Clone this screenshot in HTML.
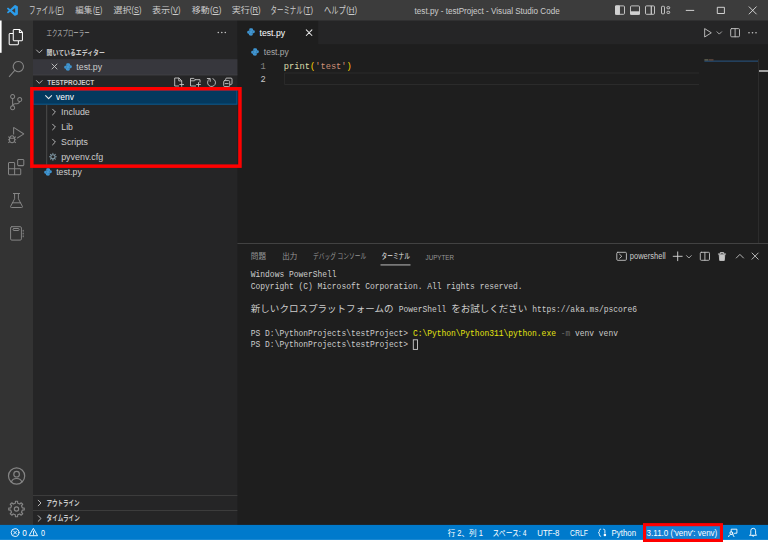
<!DOCTYPE html>
<html lang="ja"><head><meta charset="utf-8"><title>test.py - testProject - Visual Studio Code</title>
<style>
html,body{margin:0;padding:0}
body{width:768px;height:542px;position:relative;overflow:hidden;background:#ffffff;font-family:"Liberation Sans","Noto Sans CJK JP",sans-serif}
.b{position:absolute;display:block}
.t{position:absolute;white-space:pre;transform-origin:0 50%;display:block}
.t u{text-decoration:underline;text-underline-offset:1px}
svg{position:absolute;overflow:visible}
.ic{fill:none;stroke:#858585;stroke-linecap:round;stroke-linejoin:round}

</style></head>
<body>
<!-- backgrounds -->
<svg style="left:0;top:0" width="768" height="542" viewBox="0 0 768 542">
<rect x="0" y="0" width="768" height="532" fill="#1e1e1e"/>
<rect x="0" y="0" width="33" height="532" fill="#333333"/>
<rect x="33" y="0" width="204.4" height="532" fill="#252526"/>
<rect x="237.4" y="0" width="530.6" height="44.2" fill="#252526"/>
<rect x="237.4" y="0" width="80.8" height="44.2" fill="#1e1e1e"/>
<rect x="0" y="0" width="768" height="20.5" fill="#3c3c3c"/>
<rect x="0" y="524.9" width="768" height="15" fill="#007acc"/>
<!-- activity indicator -->
<rect x="0" y="20.5" width="1.6" height="32.3" fill="#ffffff"/>
<!-- sidebar rows -->
<rect x="33" y="59.2" width="204.4" height="15.8" fill="#37373d"/>
<rect x="33" y="74.6" width="204.4" height=".8" fill="#434346"/>
<rect x="33.1" y="90.1" width="203.8" height="14.1" fill="#04395e" stroke="#0b5a92" stroke-width="1"/>
<rect x="46.2" y="104.7" width="1" height="60" fill="#4c4c4c"/>
<rect x="33" y="495" width="204.4" height="1" fill="#3c3c3c"/>
<rect x="33" y="510" width="204.4" height="1" fill="#3c3c3c"/>
<!-- editor current line -->
<path d="M699 73H284.400v11.500H699" fill="none" stroke="#2b2b2b" stroke-width="1"/>
<!-- minimap/scroll -->
<rect x="758" y="59" width="1" height="184" fill="#2c2c2c"/>
<rect x="759" y="70" width="9" height="2" fill="#a0a0a0"/>
<rect x="704.4" y="60.5" width="53.6" height="1.3" fill="#264a6e"/>
<rect x="704.4" y="59.3" width="4" height="1.2" fill="#6c6c58"/>
<rect x="709" y="59.3" width="4.500" height="1.2" fill="#684e42"/>
<!-- panel -->
<rect x="237.4" y="243" width="530.6" height="1" fill="#424242"/>
<rect x="380.500" y="264.200" width="30" height="1.400" fill="#909090"/>
<rect x="413.300" y="339.800" width="4.200" height="9.600" fill="none" stroke="#cccccc" stroke-width=".9"/>
<rect x="646" y="526" width="74" height="13" fill="#1581d3"/>
</svg>
<!-- activity bar icons -->
<svg style="left:8.35px;top:28.6px" width="16.3" height="16.3" viewBox="0 0 24 24" fill="#ffffff"><path d="M17.5 0h-9L7 1.5V6H2.5L1 7.5v15.07L2.5 24h12.07L16 22.57V18h4.7l1.3-1.43V4.5L17.5 0zm0 2.12l2.38 2.38H17.5V2.12zm-3 20.38h-12v-15H7v9.07L8.5 18h6v4.5zm6-6h-12v-15H16V6h4.5v10.5z"/></svg>
<svg style="left:8.35px;top:61.3px" width="16.3" height="16.3" viewBox="0 0 24 24" fill="#858585"><path d="M15.25 0a8.25 8.25 0 0 0-6.18 13.72L1 22.88l1.12 1 8.05-9.12A8.251 8.251 0 1 0 15.25.01V0zm0 15a6.75 6.75 0 1 1 0-13.5 6.75 6.75 0 0 1 0 13.5z"/></svg>
<svg style="left:8.35px;top:94px" width="16.3" height="16.3" viewBox="0 0 24 24" fill="#858585"><path d="M21.007 8.222A3.738 3.738 0 0 0 15.045 5.2a3.737 3.737 0 0 0 1.156 6.583 2.988 2.988 0 0 1-2.668 1.67h-2.99a4.456 4.456 0 0 0-2.989 1.165V7.4a3.737 3.737 0 1 0-1.494 0v9.117a3.776 3.776 0 1 0 1.816.099 2.99 2.99 0 0 1 2.668-1.667h2.99a4.484 4.484 0 0 0 4.223-3.039 3.736 3.736 0 0 0 3.25-3.687zM4.565 3.738a2.242 2.242 0 1 1 4.484 0 2.242 2.242 0 0 1-4.484 0zm4.484 16.441a2.242 2.242 0 1 1-4.484 0 2.242 2.242 0 0 1 4.484 0zm8.221-9.715a2.242 2.242 0 1 1 0-4.485 2.242 2.242 0 0 1 0 4.485z"/></svg>
<svg style="left:8.35px;top:126.8px" width="16.3" height="16.3" viewBox="0 0 24 24" fill="#858585"><path d="M10.94 13.5l-1.32 1.32a3.73 3.73 0 0 0-7.24 0L1.06 13.5 0 14.56l1.72 1.72-.22.22V18H0v1.5h1.5v.08c.077.489.214.966.41 1.42L0 22.94 1.06 24l1.65-1.65A4.308 4.308 0 0 0 6 24a4.31 4.31 0 0 0 3.29-1.65L10.94 24 12 22.94 10.09 21c.198-.464.336-.951.41-1.45v-.1H12V18h-1.5v-1.5l-.22-.22L12 14.56l-1.06-1.06zM6 13.5a2.25 2.25 0 0 1 2.25 2.25h-4.5A2.25 2.25 0 0 1 6 13.5zm3 6a3.33 3.33 0 0 1-3 3 3.33 3.33 0 0 1-3-3v-2.25h6v2.25zm14.76-9.9v1.26L13.5 17.37V15.6l8.5-5.37L9 2v9.46a5.07 5.07 0 0 0-1.5-.72V.63L8.64 0l15.12 9.6z"/></svg>
<svg style="left:8.35px;top:159.4px" width="16.3" height="16.3" viewBox="0 0 24 24" fill="#858585"><path d="M13.5 1.5L15 0h7.5L24 1.5V9l-1.5 1.5H15L13.5 9V1.5zm1.5 0V9h7.5V1.5H15zM0 15V6l1.5-1.5H9L10.5 6v7.5H18l1.5 1.5v7.5L18 24H1.5L0 22.5V15zm9-1.5V6H1.5v7.5H9zM9 15H1.5v7.5H9V15zm1.5 7.5H18V15h-7.5v7.5z"/></svg>
<!-- flask -->
<svg style="left:0;top:0" width="33" height="260" viewBox="0 0 33 260" class="ic" stroke-width="1"><path d="M13.4 193.5h6.2M14.6 193.5v5.3l-4 7.6a.8.8 0 0 0 .7 1.1h10.4a.8.8 0 0 0 .7-1.100l-4-7.600v-5.300M12.300 202.800h8.400"/>
<!-- notebook -->
<rect x="10.600" y="226.700" width="10.800" height="13.400" rx="1.200"/><rect x="13" y="228.500" width="6.200" height="2" rx="1"/><path d="M23.200 230.300v.8M23.200 233.100v.8M23.200 235.900v.8" stroke-width="1.100"/></svg>
<!-- account -->
<svg style="left:0;top:460px" width="33" height="65" viewBox="0 460 33 65" class="ic" stroke-width="1.2"><circle cx="16.600" cy="476" r="8.100"/><circle cx="16.600" cy="474.200" r="2.800"/><path d="M11.400 482c.6-2.300 2.700-3.500 5.200-3.500s4.600 1.200 5.200 3.500"/>
<!-- gear -->
<g transform="translate(16.500 509) scale(.94)" stroke-width="1.25"><path d="M-1.28 -6.17 L-1.10 -8.23 L1.10 -8.23 L1.28 -6.17 L3.46 -5.27 L5.04 -6.60 L6.60 -5.04 L5.27 -3.46 L6.17 -1.28 L8.23 -1.10 L8.23 1.10 L6.17 1.28 L5.27 3.46 L6.60 5.04 L5.04 6.60 L3.46 5.27 L1.28 6.17 L1.10 8.23 L-1.10 8.23 L-1.28 6.17 L-3.46 5.27 L-5.04 6.60 L-6.60 5.04 L-5.27 3.46 L-6.17 1.28 L-8.23 1.10 L-8.23 -1.10 L-6.17 -1.28 L-5.27 -3.46 L-6.60 -5.04 L-5.04 -6.60 L-3.46 -5.27Z"/><circle r="2.300"/></g></svg>
<!-- sidebar header -->
<svg style="left:0;top:0" width="240" height="100" viewBox="0 0 240 100" fill="none" stroke="#c5c5c5" stroke-width="0.9" stroke-linecap="round" stroke-linejoin="round">
<!-- ellipsis -->
<g fill="#c5c5c5" stroke="none"><circle cx="218.300" cy="32.500" r=".8"/><circle cx="221.800" cy="32.500" r=".8"/><circle cx="225.300" cy="32.500" r=".8"/></g>
<!-- chevrons down -->
<path d="M36.500 50l2.800 2.800 2.800-2.800M36.500 80.600l2.800 2.800 2.800-2.800"/>
<path d="M45.600 95.600l3 3 3-3" stroke="#e8e8e8" stroke-width="1.1"/>
<!-- close x -->
<path d="M52 64l5 5M57 64l-5 5"/>
<!-- new file -->
<path d="M178.600 86h-3.900v-8h4.300l2.700 2.700v1.300M178.800 78.200v2.700h2.700M181.700 82.600v3.800M179.800 84.500h3.800"/>
<!-- new folder -->
<path d="M195.600 86h-5.100v-7.600h3.300l1.200 1.300h5v2.500M190.500 80.800h4l.9-1M198.500 82.600v3.800M196.600 84.500h3.800"/>
<!-- refresh -->
<path d="M212.9 78.700A4 4 0 1 1 209.2 79.200M207.300 78.500h2.900v2.900"/>
<!-- collapse all -->
<rect x="223.700" y="80.600" width="6" height="6" rx="1"/><path d="M225.700 79.600v-.5a1 1 0 0 1 1-1h4.300a1 1 0 0 1 1 1v4.300a1 1 0 0 1-1 1h-.5M225.200 83.600h3"/>
</svg>
<!-- tree chevrons right + icons -->
<svg style="left:0;top:100px" width="240" height="80" viewBox="0 100 240 80" fill="none" stroke="#c5c5c5" stroke-width="0.9" stroke-linecap="round" stroke-linejoin="round">
<path d="M52.600 109.200l2.800 2.800-2.800 2.800M52.600 124.200l2.800 2.800-2.800 2.800M52.600 139.200l2.800 2.800-2.800 2.800"/>
<!-- cfg gear -->
<g transform="translate(52.9 156.8) scale(.9)" stroke="#7b929e" stroke-width="1.25"><circle r="2.3"/><path d="M0-3.800v1M0 3.800v-1M-3.800 0h1M3.800 0h-1M-2.700-2.700l.7.700M2.700 2.700l-.7-.7M-2.700 2.700l.7-.7M2.700-2.700l-.7.700" stroke-width="1.150"/></g>
</svg>
<!-- outline/timeline chevrons -->
<svg style="left:0;top:495px" width="240" height="30" viewBox="0 495 240 30" fill="none" stroke="#c5c5c5" stroke-width="0.9" stroke-linecap="round" stroke-linejoin="round">
<path d="M38.200 500.200l2.800 2.800-2.800 2.800M38.200 515.700l2.800 2.800-2.800 2.800"/></svg>
<!-- python icons -->
<svg style="left:64.300px;top:62.500px" width="8" height="8" viewBox="0 0 16 16" fill="#3e93cf"><rect x="4.500" y="5" width="7" height="6" fill="#4499d2"/><path d="M7.900 0.500C5.200 .5 4.500 1.600 4.500 2.800v2h3.600v.7H2.900C1.400 5.500.3 6.600.3 8.400s1 2.900 2.300 2.900h1.600V9c0-1.400 1.200-2.500 2.500-2.500h3.600c1.100 0 1.900-.9 1.900-2V2.800C12.200 1.500 10.900.5 7.900.5z"/><path transform="rotate(180 8 8)" d="M7.900 0.500C5.200 .5 4.500 1.600 4.500 2.800v2h3.600v.7H2.900C1.400 5.500.3 6.600.3 8.400s1 2.900 2.300 2.900h1.600V9c0-1.400 1.200-2.500 2.500-2.500h3.600c1.100 0 1.900-.9 1.900-2V2.800C12.200 1.500 10.900.5 7.900.5z"/></svg>
<svg style="left:43.800px;top:168px" width="8" height="8" viewBox="0 0 16 16" fill="#3e93cf"><rect x="4.500" y="5" width="7" height="6" fill="#4499d2"/><path d="M7.900 0.500C5.200 .5 4.500 1.600 4.500 2.800v2h3.600v.7H2.900C1.400 5.500.3 6.600.3 8.400s1 2.900 2.300 2.900h1.600V9c0-1.400 1.200-2.500 2.500-2.500h3.600c1.100 0 1.900-.9 1.900-2V2.800C12.200 1.500 10.900.5 7.900.5z"/><path transform="rotate(180 8 8)" d="M7.900 0.500C5.200 .5 4.500 1.600 4.500 2.800v2h3.600v.7H2.900C1.400 5.500.3 6.600.3 8.400s1 2.900 2.300 2.900h1.600V9c0-1.400 1.200-2.500 2.500-2.500h3.600c1.100 0 1.900-.9 1.900-2V2.800C12.200 1.500 10.900.5 7.900.5z"/></svg>
<svg style="left:246.900px;top:28.300px" width="8" height="8" viewBox="0 0 16 16" fill="#3e93cf"><rect x="4.500" y="5" width="7" height="6" fill="#4499d2"/><path d="M7.900 0.500C5.200 .5 4.500 1.600 4.500 2.800v2h3.600v.7H2.900C1.400 5.500.3 6.600.3 8.400s1 2.900 2.300 2.900h1.600V9c0-1.400 1.200-2.500 2.500-2.500h3.600c1.100 0 1.900-.9 1.900-2V2.800C12.200 1.500 10.900.5 7.900.5z"/><path transform="rotate(180 8 8)" d="M7.900 0.500C5.200 .5 4.500 1.600 4.500 2.800v2h3.600v.7H2.900C1.400 5.500.3 6.600.3 8.400s1 2.900 2.300 2.900h1.600V9c0-1.400 1.200-2.500 2.500-2.500h3.600c1.100 0 1.900-.9 1.900-2V2.800C12.200 1.500 10.900.5 7.900.5z"/></svg>
<svg style="left:251px;top:48px" width="8" height="8" viewBox="0 0 16 16" fill="#3e93cf"><rect x="4.500" y="5" width="7" height="6" fill="#4499d2"/><path d="M7.900 0.500C5.200 .5 4.500 1.600 4.500 2.800v2h3.600v.7H2.900C1.400 5.500.3 6.600.3 8.400s1 2.900 2.300 2.900h1.600V9c0-1.400 1.200-2.500 2.500-2.500h3.600c1.100 0 1.900-.9 1.900-2V2.800C12.200 1.500 10.900.5 7.900.5z"/><path transform="rotate(180 8 8)" d="M7.900 0.500C5.200 .5 4.500 1.600 4.500 2.800v2h3.600v.7H2.900C1.400 5.500.3 6.600.3 8.400s1 2.900 2.300 2.900h1.600V9c0-1.400 1.200-2.500 2.500-2.500h3.600c1.100 0 1.900-.9 1.900-2V2.800C12.200 1.500 10.900.5 7.900.5z"/></svg>
<!-- title bar: logo -->
<svg style="left:6.800px;top:5.100px" width="10.900" height="10.900" viewBox="0 0 24 24"><path fill="#2b9ceb" d="M23.150 2.587L18.210.210a1.494 1.494 0 0 0-1.705.290l-9.460 8.630-4.120-3.128a.999.999 0 0 0-1.276.057L.327 7.261A1 1 0 0 0 .326 8.740L3.899 12 .326 15.260a1 1 0 0 0 .001 1.479L1.650 17.940a.999.999 0 0 0 1.276.057l4.120-3.128 9.460 8.630a1.492 1.492 0 0 0 1.704.290l4.942-2.377A1.500 1.500 0 0 0 24 20.060V3.939a1.500 1.500 0 0 0-.850-1.352zm-5.146 14.861L10.826 12l7.178-5.448v10.896z"/></svg>
<!-- title bar: layout + window controls -->
<svg style="left:600px;top:0" width="168" height="20" viewBox="600 0 168 20" fill="none" stroke="#d0d0d0" stroke-width="0.9" stroke-linejoin="round">
<rect x="615.500" y="5.900" width="9" height="8.400" rx="1"/><rect x="615.500" y="5.900" width="4" height="8.400" fill="#d0d0d0"/>
<rect x="630.500" y="5.900" width="9" height="8.400" rx="1"/><rect x="630.500" y="11.800" width="9" height="2.500" fill="#d0d0d0"/>
<rect x="645.500" y="5.900" width="9" height="8.400" rx="1"/><path d="M651.300 5.900v8.400" stroke-width="1.200"/>
<rect x="661.500" y="6.300" width="3" height="7.500" rx=".8"/><rect x="666.900" y="6.700" width="2.800" height="2.100" rx=".8"/><rect x="666.900" y="11.300" width="2.800" height="2.100" rx=".8"/>
<g stroke="#e0e0e0" stroke-width="0.9" stroke-linecap="square">
<path d="M686.300 10.400h7.400"/>
<rect x="717.800" y="7.300" width="6.600" height="6.200"/>
<path d="M749.200 6.900l7 7M756.200 6.900l-7 7"/></g>
</svg>
<!-- editor actions -->
<svg style="left:237px;top:20px" width="531" height="30" viewBox="237 20 531 30" fill="none" stroke="#c5c5c5" stroke-width="0.9" stroke-linecap="round" stroke-linejoin="round">
<path d="M306.3 29.9l5.600 5.600M311.900 29.900l-5.600 5.600" stroke="#e8e8e8" stroke-width="1.05"/>
<path d="M705 28.800l6.300 4-6.300 4z"/>
<path d="M717 31.800l2.300 2.300 2.300-2.300" stroke-width=".8"/>
<rect x="730.700" y="28.600" width="8.800" height="8.200" rx="1"/><path d="M735.100 28.600v8.200"/>
<g fill="#c5c5c5" stroke="none"><circle cx="749" cy="32.800" r=".8"/><circle cx="752.500" cy="32.800" r=".8"/><circle cx="756" cy="32.800" r=".8"/></g>
</svg>
<!-- panel actions -->
<svg style="left:600px;top:244px" width="168" height="26" viewBox="600 244 168 26" fill="none" stroke="#c5c5c5" stroke-width="0.9" stroke-linecap="round" stroke-linejoin="round">
<rect x="616.800" y="252.300" width="9.600" height="8" rx="1"/><path d="M619.600 254.300l2.200 2-2.200 2"/>
<path d="M673.200 256.300h9M677.700 251.900v8.800" stroke="#d8d8d8"/>
<path d="M686.500 255.600l2.400 2.400 2.400-2.400" stroke-width=".8"/>
<rect x="700.300" y="252.300" width="9.200" height="8" rx="1"/><path d="M704.900 252.300v8"/>
<path d="M718.300 254h7.400M720.300 253.800v-1.300h3.400v1.300M719.200 254.200l.5 6.300h4.600l.5-6.300" /><path d="M719.400 254.400h5.200l-.4 5.900h-4.400z" fill="#c5c5c5" stroke="none"/>
<path d="M736.300 258l3.600-3.600 3.600 3.600"/>
<path d="M752 253l6.200 6.200M758.200 253l-6.200 6.200"/>
</svg>
<!-- status bar icons -->
<svg style="left:0;top:525px" width="768" height="15" viewBox="0 525 768 15" fill="none" stroke="#ffffff" stroke-width="0.9" stroke-linecap="round" stroke-linejoin="round">
<circle cx="15.100" cy="532.600" r="3.900"/><path d="M13.500 531l3.200 3.200M16.700 531l-3.200 3.200"/>
<path d="M33.550 528.700l4 7h-8zM33.550 531.300v2.300M33.550 534.600v.2"/>
<!-- braces + dot -->
<path d="M600.700 529.200c-1.300 0-1.300.7-1.300 1.700 0 1-.1 1.600-1.100 1.800 1 .2 1.100.8 1.100 1.800 0 1 0 1.700 1.300 1.700M603.600 529.200c1.300 0 1.300.7 1.300 1.700v2.200"/><circle cx="604.900" cy="535" r="1.300" fill="#fff" stroke="none"/>
<!-- feedback -->
<path d="M731.200 532.300v-3.100h5.700v4h-2.300l-1.300 1.300"/><circle cx="731.300" cy="533" r="1.400"/><path d="M728.600 536.600c.3-1.500 1.300-2.100 2.700-2.100s2.400.6 2.700 2.100"/>
<!-- bell -->
<path d="M749.9 535.3h6.6l-.9-1.3v-3.3a2.4 2.4 0 0 0-4.8 0v3.3zM752.4 535.6a.8.8 0 0 0 1.6 0"/>
</svg>

<!-- text -->
<span class="t" style="left:28px;top:4px;font:9.8px/13.72px 'Liberation Sans','Noto Sans CJK JP',sans-serif;color:#cccccc;transform:translateX(0.93px) scaleX(0.6602);">ファイル</span>
<span class="t" style="left:55px;top:5px;font:8.2px/11.48px 'Liberation Sans','Noto Sans CJK JP',sans-serif;color:#cccccc;transform:translateX(0.32px) scaleX(0.8142);">(<u>F</u>)</span>
<span class="t" style="left:75px;top:5px;font:8.4px/11.76px 'Liberation Sans','Noto Sans CJK JP',sans-serif;color:#cccccc;transform:translateX(0.21px) scaleX(1.0153);">編集</span>
<span class="t" style="left:93px;top:5px;font:8.2px/11.48px 'Liberation Sans','Noto Sans CJK JP',sans-serif;color:#cccccc;transform:translateX(0.06px) scaleX(0.8360);">(<u>E</u>)</span>
<span class="t" style="left:113px;top:5px;font:8.4px/11.76px 'Liberation Sans','Noto Sans CJK JP',sans-serif;color:#cccccc;transform:translateX(0.50px) scaleX(1.0669);">選択</span>
<span class="t" style="left:131px;top:5px;font:8.2px/11.48px 'Liberation Sans','Noto Sans CJK JP',sans-serif;color:#cccccc;transform:translateX(0.54px) scaleX(0.9038);">(<u>S</u>)</span>
<span class="t" style="left:151px;top:5px;font:8.4px/11.76px 'Liberation Sans','Noto Sans CJK JP',sans-serif;color:#cccccc;transform:translateX(0.92px) scaleX(1.0883);">表示</span>
<span class="t" style="left:170px;top:5px;font:8.2px/11.48px 'Liberation Sans','Noto Sans CJK JP',sans-serif;color:#cccccc;transform:translateX(0.56px) scaleX(0.9013);">(<u>V</u>)</span>
<span class="t" style="left:191px;top:5px;font:8.4px/11.76px 'Liberation Sans','Noto Sans CJK JP',sans-serif;color:#cccccc;transform:translateX(0.86px) scaleX(1.0627);">移動</span>
<span class="t" style="left:209px;top:5px;font:8.2px/11.48px 'Liberation Sans','Noto Sans CJK JP',sans-serif;color:#cccccc;transform:translateX(0.91px) scaleX(0.9676);">(<u>G</u>)</span>
<span class="t" style="left:231px;top:5px;font:8.4px/11.76px 'Liberation Sans','Noto Sans CJK JP',sans-serif;color:#cccccc;transform:translateX(0.67px) scaleX(1.0807);">実行</span>
<span class="t" style="left:249px;top:5px;font:8.2px/11.48px 'Liberation Sans','Noto Sans CJK JP',sans-serif;color:#cccccc;transform:translateX(0.95px) scaleX(0.9428);">(<u>R</u>)</span>
<span class="t" style="left:270px;top:4px;font:9.8px/13.72px 'Liberation Sans','Noto Sans CJK JP',sans-serif;color:#cccccc;transform:translateX(0.59px) scaleX(0.6551);">ターミナル</span>
<span class="t" style="left:303px;top:5px;font:8.2px/11.48px 'Liberation Sans','Noto Sans CJK JP',sans-serif;color:#cccccc;transform:translateX(0.24px) scaleX(0.9245);">(<u>T</u>)</span>
<span class="t" style="left:324px;top:4px;font:9.8px/13.72px 'Liberation Sans','Noto Sans CJK JP',sans-serif;color:#cccccc;transform:translateX(0.02px) scaleX(0.7366);">ヘルプ</span>
<span class="t" style="left:346px;top:5px;font:8.2px/11.48px 'Liberation Sans','Noto Sans CJK JP',sans-serif;color:#cccccc;transform:translateX(0.22px) scaleX(0.9486);">(<u>H</u>)</span>
<span class="t" style="left:414px;top:6px;font:8.4px/11.76px 'Liberation Sans','Noto Sans CJK JP',sans-serif;color:#cccccc;transform:translateX(0.62px) scaleX(0.9659);">test.py - testProject - Visual Studio Code</span>
<span class="t" style="left:46px;top:29px;font:7.5px/10.5px 'Liberation Sans','Noto Sans CJK JP',sans-serif;color:#bbbbbb;transform:translateX(0.47px) scaleX(0.7211);">エクスプローラー</span>
<span class="t" style="left:46px;top:48px;font:7.2px/10.08px 'Liberation Sans','Noto Sans CJK JP',sans-serif;color:#cccccc;transform:translateX(0.58px) scaleX(0.8188);font-weight:bold">開いているエディター</span>
<span class="t" style="left:76px;top:61px;font:8.9px/12.46px 'Liberation Sans','Noto Sans CJK JP',sans-serif;color:#cccccc;transform:translateX(0.35px) scaleX(0.9836);">test.py</span>
<span class="t" style="left:47px;top:78px;font:7.7px/10.78px 'Liberation Sans','Noto Sans CJK JP',sans-serif;color:#cccccc;transform:translateX(0.21px) scaleX(0.8382);font-weight:bold">TESTPROJECT</span>
<span class="t" style="left:56px;top:91px;font:8.9px/12.46px 'Liberation Sans','Noto Sans CJK JP',sans-serif;color:#ffffff;transform:translateX(0.07px) scaleX(0.9530);">venv</span>
<span class="t" style="left:61px;top:106px;font:8.9px/12.46px 'Liberation Sans','Noto Sans CJK JP',sans-serif;color:#cccccc;transform:translateX(0.11px) scaleX(1.0019);">Include</span>
<span class="t" style="left:61px;top:121px;font:8.9px/12.46px 'Liberation Sans','Noto Sans CJK JP',sans-serif;color:#cccccc;transform:translateX(0.35px) scaleX(0.9748);">Lib</span>
<span class="t" style="left:61px;top:136px;font:8.9px/12.46px 'Liberation Sans','Noto Sans CJK JP',sans-serif;color:#cccccc;transform:translateX(0.05px) scaleX(0.9875);">Scripts</span>
<span class="t" style="left:61px;top:151px;font:8.9px/12.46px 'Liberation Sans','Noto Sans CJK JP',sans-serif;color:#cccccc;transform:translateX(0.15px) scaleX(1.0043);">pyvenv.cfg</span>
<span class="t" style="left:56px;top:166px;font:8.9px/12.46px 'Liberation Sans','Noto Sans CJK JP',sans-serif;color:#cccccc;transform:translateX(0.14px) scaleX(0.9792);">test.py</span>
<span class="t" style="left:46px;top:499px;font:7.6px/10.64px 'Liberation Sans','Noto Sans CJK JP',sans-serif;color:#cccccc;transform:translateX(0.40px) scaleX(0.7284);font-weight:bold">アウトライン</span>
<span class="t" style="left:46px;top:514px;font:7.6px/10.64px 'Liberation Sans','Noto Sans CJK JP',sans-serif;color:#cccccc;transform:translateX(0.53px) scaleX(0.7387);font-weight:bold">タイムライン</span>
<span class="t" style="left:259px;top:27px;font:8.9px/12.46px 'Liberation Sans','Noto Sans CJK JP',sans-serif;color:#ffffff;transform:translateX(0.49px) scaleX(0.9777);">test.py</span>
<span class="t" style="left:263px;top:46px;font:8.9px/12.46px 'Liberation Sans','Noto Sans CJK JP',sans-serif;color:#a9a9a9;transform:translateX(0.84px) scaleX(0.9525);">test.py</span>
<span class="t" style="left:260px;top:60px;font:9.3px/13.02px 'Liberation Mono','Noto Sans CJK JP',monospace;color:#858585;transform:translateX(0.50px) scaleX(0.9373);">1</span>
<span class="t" style="left:260px;top:73px;font:9.3px/13.02px 'Liberation Mono','Noto Sans CJK JP',monospace;color:#c6c6c6;transform:translateX(0.60px) scaleX(0.9373);">2</span>
<span class="t" style="left:283px;top:60px;font:9.3px/13.02px 'Liberation Mono','Noto Sans CJK JP',monospace;color:#d4d4d4;transform:translateX(0.80px) scaleX(0.9373);"><span style="color:#dcdcaa">print</span><span style="color:#ffd700">(</span><span style="color:#ce9178">'test'</span><span style="color:#ffd700">)</span></span>
<span class="t" style="left:250px;top:252px;font:7.7px/10.78px 'Liberation Sans','Noto Sans CJK JP',sans-serif;color:#969696;transform:translateX(0.87px) scaleX(0.9809);">問題</span>
<span class="t" style="left:282px;top:252px;font:7.7px/10.78px 'Liberation Sans','Noto Sans CJK JP',sans-serif;color:#969696;transform:translateX(0.34px) scaleX(0.9742);">出力</span>
<span class="t" style="left:313px;top:252px;font:7.7px/10.78px 'Liberation Sans','Noto Sans CJK JP',sans-serif;color:#969696;transform:translateX(0.09px) scaleX(0.7438);">デバッグ コンソール</span>
<span class="t" style="left:381px;top:252px;font:7.7px/10.78px 'Liberation Sans','Noto Sans CJK JP',sans-serif;color:#e7e7e7;transform:translateX(0.54px) scaleX(0.7397);">ターミナル</span>
<span class="t" style="left:425px;top:253px;font:7.7px/10.78px 'Liberation Sans','Noto Sans CJK JP',sans-serif;color:#969696;transform:translateX(0.60px) scaleX(0.8101);">JUPYTER</span>
<span class="t" style="left:629px;top:251px;font:8.3px/11.62px 'Liberation Sans','Noto Sans CJK JP',sans-serif;color:#cccccc;transform:translateX(0.83px) scaleX(0.9059);">powershell</span>
<span class="t" style="left:250px;top:269px;font:9.1px/12.74px 'Liberation Mono','Noto Sans CJK JP',monospace;color:#cccccc;transform:translateX(0.80px) scaleX(0.8736);">Windows PowerShell</span>
<span class="t" style="left:250px;top:281px;font:9.1px/12.74px 'Liberation Mono','Noto Sans CJK JP',monospace;color:#cccccc;transform:translateX(0.80px) scaleX(0.8736);">Copyright (C) Microsoft Corporation. All rights reserved.</span>
<span class="t" style="left:250px;top:303px;font:9.54px/13.36px 'Liberation Mono','Noto Sans CJK JP',monospace;color:#cccccc;transform:translateX(0.80px) scaleX(1.0000);">新しいクロスプラットフォームの</span>
<span class="t" style="left:398px;top:304px;font:9.1px/12.74px 'Liberation Mono','Noto Sans CJK JP',monospace;color:#cccccc;transform:translateX(0.67px) scaleX(0.8736);">PowerShell</span>
<span class="t" style="left:451px;top:303px;font:9.54px/13.36px 'Liberation Mono','Noto Sans CJK JP',monospace;color:#cccccc;transform:translateX(0.14px) scaleX(1.0000);">をお試しください</span>
<span class="t" style="left:532px;top:304px;font:9.1px/12.74px 'Liberation Mono','Noto Sans CJK JP',monospace;color:#cccccc;transform:translateX(0.23px) scaleX(0.8736);">https://aka.ms/pscore6</span>
<span class="t" style="left:250px;top:328px;font:9.1px/12.74px 'Liberation Mono','Noto Sans CJK JP',monospace;color:#cccccc;transform:translateX(0.80px) scaleX(0.8736);">PS D:\PythonProjects\testProject&gt; <span style="color:#e5e510">C:\Python\Python311\python.exe</span> <span style="color:#6a6a6a">-m</span> venv venv</span>
<span class="t" style="left:250px;top:339px;font:9.1px/12.74px 'Liberation Mono','Noto Sans CJK JP',monospace;color:#cccccc;transform:translateX(0.80px) scaleX(0.8736);">PS D:\PythonProjects\testProject&gt;</span>
<span class="t" style="left:22px;top:528px;font:8.3px/11.62px 'Liberation Sans','Noto Sans CJK JP',sans-serif;color:#ffffff;transform:translateX(0.20px) scaleX(0.9924);">0</span>
<span class="t" style="left:40px;top:528px;font:8.3px/11.62px 'Liberation Sans','Noto Sans CJK JP',sans-serif;color:#ffffff;transform:translateX(0.88px) scaleX(0.8613);">0</span>
<span class="t" style="left:447px;top:528px;font:8.3px/11.62px 'Liberation Sans','Noto Sans CJK JP',sans-serif;color:#ffffff;transform:translateX(0.64px) scaleX(0.9099);">行 2、列 1</span>
<span class="t" style="left:492px;top:528px;font:8.3px/11.62px 'Liberation Sans','Noto Sans CJK JP',sans-serif;color:#ffffff;transform:translateX(0.54px) scaleX(0.8179);">スペース: 4</span>
<span class="t" style="left:537px;top:528px;font:8.3px/11.62px 'Liberation Sans','Noto Sans CJK JP',sans-serif;color:#ffffff;transform:translateX(0.29px) scaleX(0.9437);">UTF-8</span>
<span class="t" style="left:570px;top:528px;font:8.3px/11.62px 'Liberation Sans','Noto Sans CJK JP',sans-serif;color:#ffffff;transform:translateX(0.08px) scaleX(0.8178);">CRLF</span>
<span class="t" style="left:611px;top:528px;font:8.3px/11.62px 'Liberation Sans','Noto Sans CJK JP',sans-serif;color:#ffffff;transform:translateX(0.55px) scaleX(0.9475);">Python</span>
<span class="t" style="left:646px;top:528px;font:8.3px/11.62px 'Liberation Sans','Noto Sans CJK JP',sans-serif;color:#ffffff;transform:translateX(0.60px) scaleX(0.9667);">3.11.0 ('venv': venv)</span>
<!-- red annotations -->
<svg style="left:0;top:0" width="768" height="542" viewBox="0 0 768 542" fill="none" stroke="#ff0000">
<rect x="31.850" y="88.750" width="208.100" height="77.400" stroke-width="3.500"/>
<rect x="644.550" y="524.650" width="76.900" height="15.800" stroke-width="3.100"/>
</svg>
</body></html>
